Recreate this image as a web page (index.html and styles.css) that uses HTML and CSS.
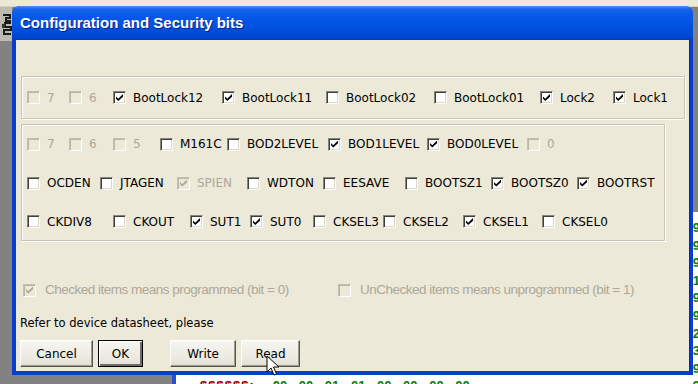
FILE: index.html
```html
<!DOCTYPE html>
<html lang="en">
<head>
<meta charset="UTF-8">
<title>Configuration and Security bits</title>
<link rel="stylesheet" href="styles.css">
</head>
<body>
<!-- ===== desktop behind the dialog ===== -->
<div class="desk-top"></div>
<div class="desk-icon">
  <svg width="10" height="24" viewBox="0 0 10 24"><path d="M1 2h7v3H4v3h4v2H3v4h6v3H2v4h7" fill="none" stroke="#1a1a1a" stroke-width="2"/><rect x="0" y="11" width="3" height="4" fill="#333"/></svg>
</div>
<div class="hexview">
  <div class="hexline"><span class="addr">$$$$$$:</span><span class="bytes">00 00 01 01 00 00 00 00</span><span class="sum">9</span></div>
  <div class="hexline"><span class="addr">$$$$$$:</span><span class="bytes">00 00 01 01 00 00 00 00</span><span class="sum">9</span></div>
  <div class="hexline"><span class="addr">$$$$$$:</span><span class="bytes">00 00 01 01 00 00 00 00</span><span class="sum">9</span></div>
  <div class="hexline"><span class="addr">$$$$$$:</span><span class="bytes">00 00 01 01 00 00 00 00</span><span class="sum">1</span></div>
  <div class="hexline"><span class="addr">$$$$$$:</span><span class="bytes">00 00 01 01 00 00 00 00</span><span class="sum">9</span></div>
  <div class="hexline"><span class="addr">$$$$$$:</span><span class="bytes">00 00 01 01 00 00 00 00</span><span class="sum">9</span></div>
  <div class="hexline"><span class="addr">$$$$$$:</span><span class="bytes">00 00 01 01 00 00 00 00</span><span class="sum">2</span></div>
  <div class="hexline"><span class="addr">$$$$$$:</span><span class="bytes">00 00 01 01 00 00 00 00</span><span class="sum">3</span></div>
  <div class="hexline"><span class="addr">$$$$$$:</span><span class="bytes">00 00 01 01 00 00 00 00</span><span class="sum">9</span></div>
  <div class="hexline"><span class="addr">$$$$$$:</span><span class="bytes">00 00 01 01 00 00 00 00</span><span class="sum">9</span></div>
</div>

<!-- ===== dialog ===== -->
<div class="dialog">
  <div class="titlebar">Configuration and Security bits</div>
  <div class="client">

    <div class="group lockbits">
      <label class="cb off"><span class="box"></span>7</label>
      <label class="cb off"><span class="box"></span>6</label>
      <label class="cb"><span class="box on"></span>BootLock12</label>
      <label class="cb"><span class="box on"></span>BootLock11</label>
      <label class="cb"><span class="box"></span>BootLock02</label>
      <label class="cb"><span class="box"></span>BootLock01</label>
      <label class="cb"><span class="box on"></span>Lock2</label>
      <label class="cb"><span class="box on"></span>Lock1</label>
    </div>

    <div class="group fuses">
      <div class="fuse-row ext">
        <label class="cb off"><span class="box"></span>7</label>
        <label class="cb off"><span class="box"></span>6</label>
        <label class="cb off"><span class="box"></span>5</label>
        <label class="cb"><span class="box"></span>M161C</label>
        <label class="cb"><span class="box"></span>BOD2LEVEL</label>
        <label class="cb"><span class="box on"></span>BOD1LEVEL</label>
        <label class="cb"><span class="box on"></span>BOD0LEVEL</label>
        <label class="cb off"><span class="box"></span>0</label>
      </div>
      <div class="fuse-row high">
        <label class="cb"><span class="box"></span>OCDEN</label>
        <label class="cb"><span class="box"></span>JTAGEN</label>
        <label class="cb off"><span class="box on"></span>SPIEN</label>
        <label class="cb"><span class="box"></span>WDTON</label>
        <label class="cb"><span class="box"></span>EESAVE</label>
        <label class="cb"><span class="box"></span>BOOTSZ1</label>
        <label class="cb"><span class="box on"></span>BOOTSZ0</label>
        <label class="cb"><span class="box on"></span>BOOTRST</label>
      </div>
      <div class="fuse-row low">
        <label class="cb"><span class="box"></span>CKDIV8</label>
        <label class="cb"><span class="box"></span>CKOUT</label>
        <label class="cb"><span class="box on"></span>SUT1</label>
        <label class="cb"><span class="box on"></span>SUT0</label>
        <label class="cb"><span class="box"></span>CKSEL3</label>
        <label class="cb"><span class="box"></span>CKSEL2</label>
        <label class="cb"><span class="box on"></span>CKSEL1</label>
        <label class="cb"><span class="box"></span>CKSEL0</label>
      </div>
    </div>

    <div class="legend">
      <label class="cb off note"><span class="box on"></span>Checked items means programmed (bit = 0)</label>
      <label class="cb off note"><span class="box"></span>UnChecked items means unprogrammed (bit = 1)</label>
    </div>

    <div class="hint">Refer to device datasheet, please</div>

    <div class="buttons">
      <button class="btn cancel">Cancel</button>
      <button class="btn ok default">OK</button>
      <button class="btn write">Write</button>
      <button class="btn read">Read</button>
    </div>
  </div>
</div>

<!-- mouse pointer over Read -->
<svg class="pointer" width="14" height="22" viewBox="0 0 14 22"><path d="M1 1v16l4-4 3 7 2.5-1-3-7h5.5z" fill="#fff" stroke="#000" stroke-width="1"/></svg>
</body>
</html>
```

FILE: styles.css
```css
/* ==== desktop ==== */
*{box-sizing:border-box;margin:0;padding:0}
body{
  width:698px;height:384px;overflow:hidden;position:relative;
  background:#828282;
  font-family:"DejaVu Sans",Verdana,sans-serif;font-size:12px;
}
.desk-top{position:absolute;left:0;top:0;width:100%;height:7px;background:#ece9d8;border-bottom:1px solid #d6d2c2}
.desk-icon{position:absolute;left:0;top:7px;width:12px;height:34px;background:#bdbab0;padding:6px 0 0 2px}

.hexview{
  position:absolute;left:172px;top:212px;right:-2px;bottom:0;
  background:#fff;border-left:4px solid #2a4fc8;padding-top:7px;
  font-family:"Liberation Sans",Arial,sans-serif;font-weight:bold;font-size:13px;
}
.hexline{display:flex;height:17.6px;line-height:17.6px;padding-left:24px;white-space:nowrap}
.addr{color:#9a0000;letter-spacing:1px;margin-right:18px}
.bytes{color:#008000;word-spacing:8px}
.sum{color:#0a7a0a;margin-left:auto}

/* ==== dialog window ==== */
.dialog{
  position:absolute;left:12px;top:6px;width:681px;height:369px;
  display:flex;flex-direction:column;
  border-radius:8px 8px 0 0;
  background:#0a3ccd;
}
.titlebar{
  height:34px;flex:none;padding:0 0 2px 8px;
  display:flex;align-items:center;
  border-radius:8px 8px 0 0;
  background:linear-gradient(#4d94f7 0,#1764ec 3px,#0658e8 10px,#0052e0 60%,#0046d2 92%,#003bb8 100%);
  color:#fff;font:bold 15px "Liberation Sans",Arial,sans-serif;
  text-shadow:1px 1px 0 #0c1e8c;
}
.client{
  flex:1;margin:0 3px 4px 4px;
  background:#ece9d8;
  padding:36px 4px 0 5px;
  display:flex;flex-direction:column;
  border-right:1px solid #0a2a9a;
}

/* ==== group boxes ==== */
.group{
  border:1px solid #c9c5b4;
  box-shadow:inset 1px 1px 0 #fff,1px 1px 0 #fff;
}
.lockbits{
  height:43px;width:664px;padding-left:5px;
  display:grid;align-items:center;
  grid-template-columns:42px 44px 109px 104px 108px 106px 73px 1fr;
}
.fuses{margin-top:5px;height:117px;width:644px;padding-left:5px;display:grid;grid-template-rows:38px 40px 37px}
.fuse-row{display:grid;align-items:center}
.fuse-row.ext{grid-template-columns:42px 44px 47px 67px 101px 99px 100px 1fr}
.fuse-row.high{grid-template-columns:73px 77px 70px 76px 82px 86px 86px 1fr}
.fuse-row.low{grid-template-columns:86px 77px 60px 63px 70px 80px 79px 1fr}

/* ==== check boxes ==== */
.cb{display:flex;align-items:center;gap:7px;white-space:nowrap;color:#000;line-height:14px}
.cb.off{color:#aca899}
.box{
  width:13px;height:13px;flex:none;position:relative;
  background:#fff;
  border:1px solid;border-color:#87847a #fdfdfb #fdfdfb #87847a;
  box-shadow:inset 1px 1px 0 #3f3e3a,inset -1px -1px 0 #dcd8c8;
}
.cb.off .box{background:#ece9d8;border-color:#c3c0b2 #fff #fff #c3c0b2;box-shadow:inset 1px 1px 0 #b9b6a8}
.box.on::after{
  content:"";position:absolute;left:2px;top:2px;width:7px;height:7px;
  background:#000;
  clip-path:polygon(0 35%,32% 68%,100% 0,100% 40%,32% 100%,0 68%);
}
.cb.off .box.on::after{background:#aca899}

/* ==== notes and buttons ==== */
.legend{margin-top:39px;height:20px;display:grid;grid-template-columns:315px 1fr;padding-left:2px;align-items:center}
.note{font-family:"Liberation Sans",Arial,sans-serif;font-size:13.5px;gap:9px;letter-spacing:-.5px;color:#b3b0a2}
.hint{margin-top:16px;height:14px;line-height:14px;font-size:11.5px;color:#000;margin-left:-1px}
.buttons{margin-top:10px;display:flex;margin-left:-1px}
.btn{
  height:27px;font:12px "DejaVu Sans",Verdana,sans-serif;color:#000;
  background:linear-gradient(#f6f5f0,#ebe9e0 70%,#e2dfd3);
  border:1px solid;border-color:#fff #555 #555 #fff;
  box-shadow:inset -1px -1px 0 #9d9a8e;
}
.btn.default{border:1px solid #000;box-shadow:inset 1px 1px 0 #fff,inset -2px -2px 0 #6f6d66}
.cancel{width:73px}
.ok{width:45px;margin-left:5px}
.write{width:66px;margin-left:27px}
.read{width:59px;margin-left:5px}

.pointer{position:absolute;left:266px;top:355px}
```
